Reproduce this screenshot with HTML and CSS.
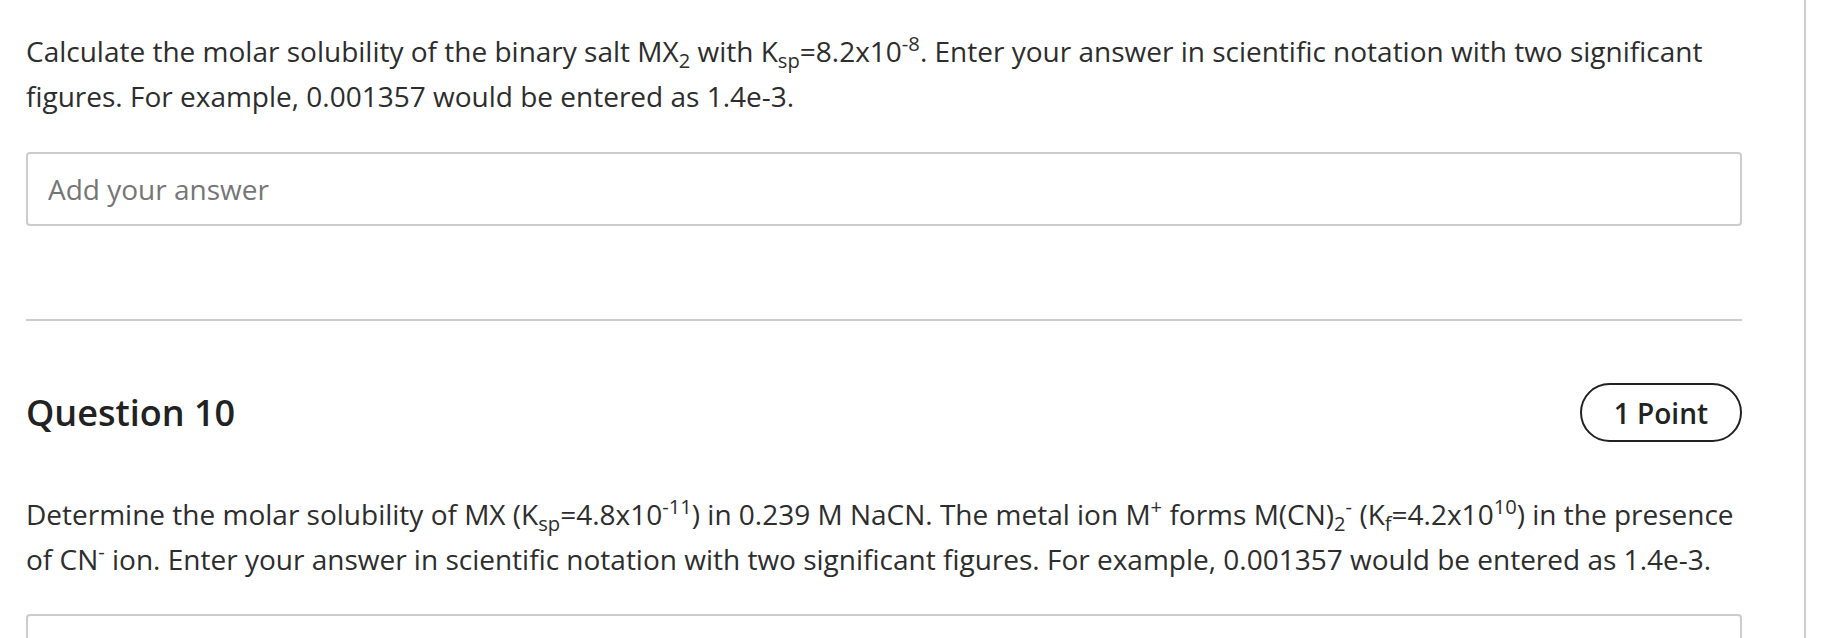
FILE: index.html
```html
<!DOCTYPE html>
<html lang="en">
<head>
<meta charset="utf-8">
<title>Quiz</title>
<link rel="stylesheet" href="styles.css">
</head>
<body>
<div class="page">
  <section class="question">
    <p class="prompt">Calculate the molar solubility of the binary salt MX<sub>2</sub> with K<sub>sp</sub>=8.2x10<sup>-8</sup>. Enter your answer in scientific notation with two significant figures. For example, 0.001357 would be entered as 1.4e-3.</p>
    <input class="answer" type="text" placeholder="Add your answer">
  </section>
  <div class="divider"></div>
  <section class="question">
    <div class="q-head">
      <h2 class="q-title">Question 10</h2>
      <span class="badge">1 Point</span>
    </div>
    <p class="prompt prompt-after-head">Determine the molar solubility of MX (K<sub>sp</sub>=4.8x10<sup>-11</sup>) in 0.239 M NaCN. The metal ion M<sup>+</sup> forms M(CN)<sub>2</sub><sup>-</sup> (K<sub>f</sub>=4.2x10<sup>10</sup>) in the presence of CN<sup>-</sup> ion. Enter your answer in scientific notation with two significant figures. For example, 0.001357 would be entered as 1.4e-3.</p>
    <input class="answer" type="text" placeholder="Add your answer">
  </section>
</div>
</body>
</html>
```
FILE: styles.css
```css
html, body {
  margin: 0;
  padding: 0;
  background: #ffffff;
}

body {
  font-family: "Open Sans", "Noto Sans", sans-serif;
  color: #2d2d2d;
  overflow: hidden;
}

.page {
  box-sizing: border-box;
  width: 1806px;
  min-height: 100vh;
  padding: 29px 62px 0 26px;
  border-right: 2px solid #cccccc;
}

.prompt {
  margin: 0 0 33px;
  font-size: 28px;
  line-height: 45px;
}

.prompt-after-head {
  margin-top: 50px;
  margin-bottom: 32px;
}

.prompt sub,
.prompt sup {
  font-size: 72%;
  line-height: 0;
  position: relative;
  vertical-align: baseline;
}

.prompt sup {
  top: -0.55em;
}

.prompt sub {
  bottom: -0.3em;
}

.answer {
  display: block;
  box-sizing: border-box;
  width: 100%;
  height: 74px;
  margin: 0;
  padding: 0 20px;
  border: 2px solid #cccccc;
  border-radius: 4px;
  background: #ffffff;
  font-family: "Open Sans", "Noto Sans", sans-serif;
  font-size: 28px;
  color: #2d2d2d;
  outline: none;
}

.answer::placeholder {
  color: #767676;
  opacity: 1;
}

.divider {
  height: 2px;
  margin-top: 93px;
  background: #cccccc;
}

.q-head {
  display: flex;
  align-items: center;
  justify-content: space-between;
  margin-top: 62px;
  height: 59px;
}

.q-title {
  margin: 0;
  font-size: 36px;
  font-weight: 600;
  line-height: 1.2;
  color: #222222;
}

.badge {
  display: inline-flex;
  align-items: center;
  justify-content: center;
  box-sizing: border-box;
  height: 59px;
  padding: 0 32px;
  border: 2px solid #222222;
  border-radius: 30px;
  font-size: 28px;
  font-weight: 600;
  color: #222222;
}
```
